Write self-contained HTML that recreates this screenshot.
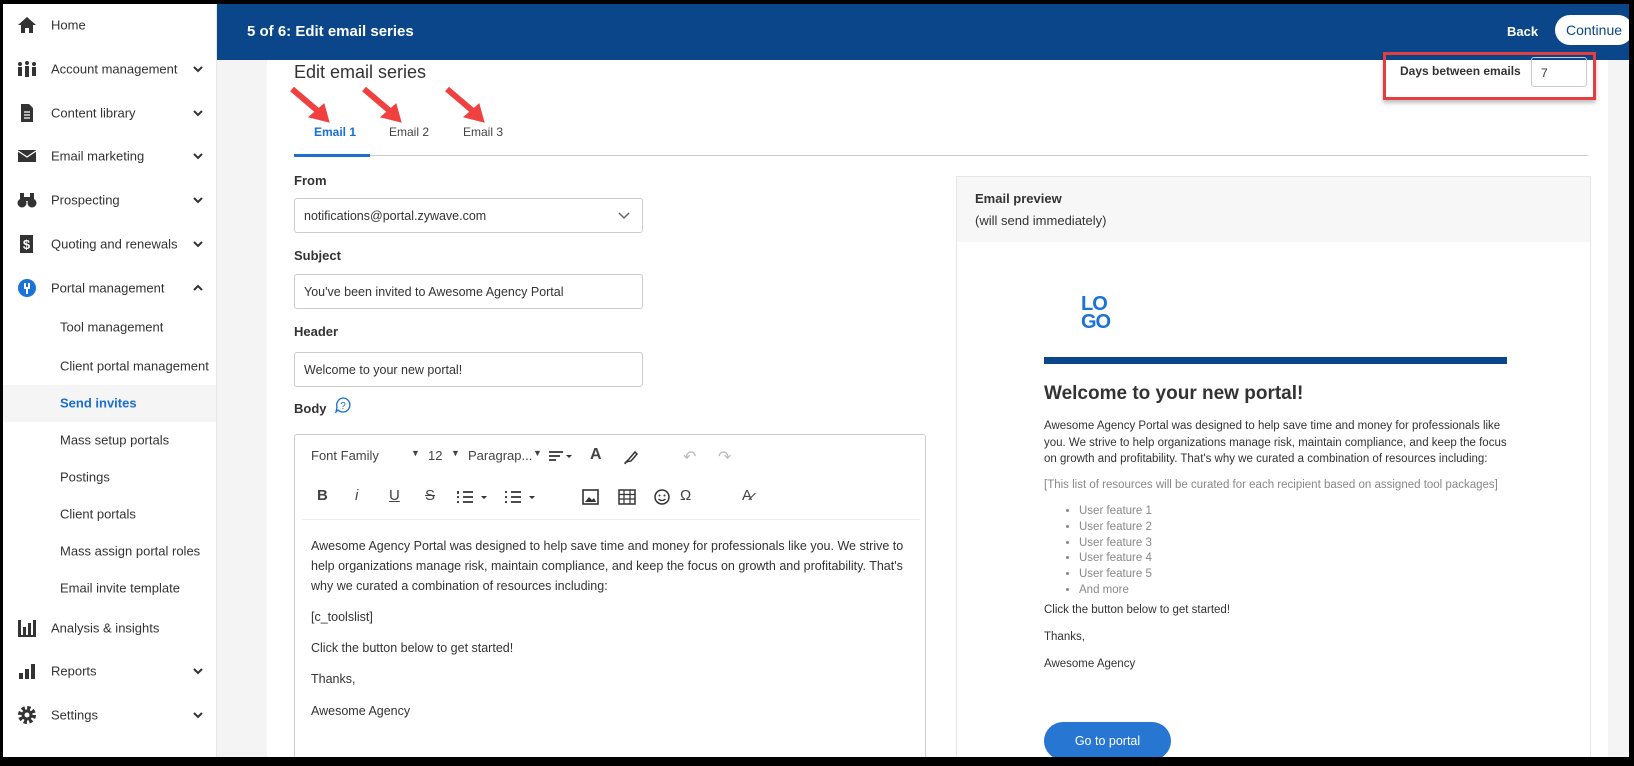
<!DOCTYPE html>
<html><head><meta charset="utf-8">
<style>
*{box-sizing:border-box;margin:0;padding:0}
body{width:1634px;height:766px;background:#000;position:relative;overflow:hidden;font-family:"Liberation Sans",sans-serif;color:#333}
.frame{position:absolute;left:3px;top:4px;width:1626px;height:753px;background:#f4f4f4;overflow:hidden}
.side{position:absolute;left:0;top:0;width:214px;height:753px;background:#fff;border-right:1px solid #e6e6e6}
.si{position:absolute;left:48px;font-size:13px;color:#333;transform:translateY(-50%)}
.sub{position:absolute;left:57px;font-size:13px;color:#333;transform:translateY(-50%)}
.ic{position:absolute;left:14px;width:20px;height:20px;transform:translateY(-50%)}
.chev{position:absolute;left:190px;width:10px;height:10px;transform:translateY(-50%)}
.hdr{position:absolute;left:214px;top:0;right:0;height:56px;background:#0b468a}
.main{position:absolute;left:264px;top:56px;width:1341px;height:697px;background:#fff}
.abs{position:absolute}
.lbl{position:absolute;left:27px;font-size:13px;color:#333;font-weight:bold}
.inp{position:absolute;left:27px;width:349px;height:35px;border:1px solid #ccc;border-radius:3px;font-size:12.5px;color:#333;padding:10px 9px}
.tb{position:absolute;font-size:13px;color:#444}
.pv{position:absolute;font-size:11.5px;color:#333;line-height:16.5px}
</style></head><body>
<div class="frame">
<div class="side">
  <svg class="ic" style="top:21px" viewBox="0 0 20 20"><path d="M10 2 L1 10 H4 V18 H8 V13 H12 V18 H16 V10 H19 Z" fill="#333"/></svg><div class="si" style="top:21px">Home</div>
  <svg class="ic" style="top:65px" viewBox="0 0 20 20"><g fill="#333"><circle cx="3" cy="5" r="2"/><circle cx="10" cy="4" r="2"/><circle cx="17" cy="5" r="2"/><rect x="1" y="8" width="4" height="9"/><rect x="8" y="7" width="4" height="11"/><rect x="15" y="8" width="4" height="9"/></g></svg><div class="si" style="top:65px">Account management</div><svg class="chev" style="top:65px" viewBox="0 0 10 10"><path d="M1 3 L5 7 L9 3" stroke="#333" stroke-width="2" fill="none"/></svg>
  <svg class="ic" style="top:109px" viewBox="0 0 20 20"><path d="M4 1 H12 L16 5 V19 H4 Z" fill="#333"/><path d="M7 9 H13 M7 12 H13 M7 15 H13" stroke="#fff" stroke-width="1.3"/></svg><div class="si" style="top:109px">Content library</div><svg class="chev" style="top:109px" viewBox="0 0 10 10"><path d="M1 3 L5 7 L9 3" stroke="#333" stroke-width="2" fill="none"/></svg>
  <svg class="ic" style="top:152px" viewBox="0 0 20 20"><rect x="1" y="4" width="18" height="12" fill="#333"/><path d="M1 5 L10 11 L19 5" stroke="#fff" stroke-width="1.3" fill="none"/></svg><div class="si" style="top:152px">Email marketing</div><svg class="chev" style="top:152px" viewBox="0 0 10 10"><path d="M1 3 L5 7 L9 3" stroke="#333" stroke-width="2" fill="none"/></svg>
  <svg class="ic" style="top:196px" viewBox="0 0 20 20"><g fill="#333"><circle cx="5" cy="13" r="4.5"/><circle cx="15" cy="13" r="4.5"/><rect x="3" y="3" width="4" height="8"/><rect x="13" y="3" width="4" height="8"/><rect x="7" y="7" width="6" height="4"/></g></svg><div class="si" style="top:196px">Prospecting</div><svg class="chev" style="top:196px" viewBox="0 0 10 10"><path d="M1 3 L5 7 L9 3" stroke="#333" stroke-width="2" fill="none"/></svg>
  <svg class="ic" style="top:240px" viewBox="0 0 20 20"><rect x="3" y="1" width="13" height="18" fill="#333"/><text x="9.5" y="15" font-size="13" font-weight="bold" fill="#fff" text-anchor="middle" font-family="Liberation Sans">$</text></svg><div class="si" style="top:240px">Quoting and renewals</div><svg class="chev" style="top:240px" viewBox="0 0 10 10"><path d="M1 3 L5 7 L9 3" stroke="#333" stroke-width="2" fill="none"/></svg>
  <svg class="ic" style="top:284px" viewBox="0 0 20 20"><circle cx="10" cy="10" r="9" fill="#1a73d9"/><path d="M8 5 V10 H12 V5 M10 10 V16" stroke="#fff" stroke-width="2" fill="none"/></svg><div class="si" style="top:284px">Portal management</div><svg class="chev" style="top:284px" viewBox="0 0 10 10"><path d="M1 7 L5 3 L9 7" stroke="#333" stroke-width="2" fill="none"/></svg>
  <div class="sub" style="top:323px">Tool management</div>
  <div class="sub" style="top:362px">Client portal management</div>
  <div class="abs" style="left:0;top:381px;width:213px;height:37px;background:#f5f5f5"></div>
  <div class="sub" style="top:399px;color:#1a6fd0;font-weight:bold">Send invites</div>
  <div class="sub" style="top:436px">Mass setup portals</div>
  <div class="sub" style="top:473px">Postings</div>
  <div class="sub" style="top:510px">Client portals</div>
  <div class="sub" style="top:547px">Mass assign portal roles</div>
  <div class="sub" style="top:584px">Email invite template</div>
  <svg class="ic" style="top:624px" viewBox="0 0 20 20"><g fill="#333"><rect x="1" y="2" width="3" height="16"/><rect x="6" y="9" width="3" height="9"/><rect x="11" y="5" width="3" height="13"/><rect x="16" y="2" width="3" height="16"/><rect x="1" y="17" width="18" height="2"/></g></svg><div class="si" style="top:624px">Analysis &amp; insights</div>
  <svg class="ic" style="top:667px" viewBox="0 0 20 20"><g fill="#333"><rect x="2" y="12" width="4" height="6"/><rect x="8" y="8" width="4" height="10"/><rect x="14" y="3" width="4" height="15"/></g></svg><div class="si" style="top:667px">Reports</div><svg class="chev" style="top:667px" viewBox="0 0 10 10"><path d="M1 3 L5 7 L9 3" stroke="#333" stroke-width="2" fill="none"/></svg>
  <svg class="ic" style="top:711px" viewBox="0 0 20 20"><circle cx="10" cy="10" r="6.5" fill="none" stroke="#333" stroke-width="5" stroke-dasharray="3 2.1"/><circle cx="10" cy="10" r="5.5" fill="#333"/><circle cx="10" cy="10" r="2.5" fill="#fff"/></svg><div class="si" style="top:711px">Settings</div><svg class="chev" style="top:711px" viewBox="0 0 10 10"><path d="M1 3 L5 7 L9 3" stroke="#333" stroke-width="2" fill="none"/></svg>
</div>

<div class="hdr">
  <div class="abs" style="left:30px;top:19px;color:#fff;font-size:15px;font-weight:bold">5 of 6: Edit email series</div>
  <div class="abs" style="left:1290px;top:20px;color:#fff;font-size:13px;font-weight:bold">Back</div>
  <div class="abs" style="left:1338px;top:11px;width:78px;height:30px;border-radius:15px;background:#fff;color:#0b468a;font-size:14px;text-align:center;line-height:30px">Continue</div>
</div>

<div class="main">
  <div class="abs" style="left:27px;top:2px;font-size:18px;color:#333">Edit email series</div>
  <div class="tb" style="left:47px;top:65px;color:#1a6fd0;font-weight:bold;font-size:12px">Email 1</div>
  <div class="tb" style="left:122px;top:65px;font-size:12px">Email 2</div>
  <div class="tb" style="left:196px;top:65px;font-size:12px">Email 3</div>
  <div class="abs" style="left:27px;top:95px;width:1294px;height:1px;background:#ccc"></div>
  <div class="abs" style="left:27px;top:94px;width:76px;height:3px;background:#1a6fd0"></div>
  <svg class="abs" style="left:0;top:0" width="260" height="80" viewBox="0 0 260 80"><g fill="#f04040" stroke="#f04040"><path d="M25 29 L52 52" stroke-width="6"/><path d="M62 62 L42 57 L57 44 Z"/><path d="M97 29 L124 52" stroke-width="6"/><path d="M134 62 L114 57 L129 44 Z"/><path d="M180 29 L207 52" stroke-width="6"/><path d="M217 62 L197 57 L212 44 Z"/></g></svg>
  <div class="abs" style="left:1116px;top:-8px;width:213px;height:48px;border:3px solid #e53e3e;box-shadow:0 3px 4px rgba(0,0,0,.25)"></div>
  <div class="abs" style="left:1133px;top:4px;font-size:12px;font-weight:bold;color:#333">Days between emails</div>
  <div class="abs" style="left:1264px;top:-3px;width:56px;height:30px;border:1px solid #ccc;border-radius:3px;font-size:12px;padding:8px 9px">7</div>

  <div class="lbl" style="top:113px">From</div>
  <div class="inp" style="top:138px">notifications@portal.zywave.com<svg class="abs" style="right:12px;top:13px" width="12" height="8" viewBox="0 0 12 8"><path d="M1 1 L6 6 L11 1" stroke="#666" stroke-width="1.5" fill="none"/></svg></div>
  <div class="lbl" style="top:188px">Subject</div>
  <div class="inp" style="top:214px">You've been invited to Awesome Agency Portal</div>
  <div class="lbl" style="top:264px">Header</div>
  <div class="inp" style="top:292px">Welcome to your new portal!</div>
  <div class="lbl" style="top:341px">Body</div>
  <svg class="abs" style="left:68px;top:337px" width="16" height="16" viewBox="0 0 16 16"><path d="M8 1 A7 7 0 1 1 3 13 L1 15 L2 10 A7 7 0 0 1 8 1Z" fill="none" stroke="#1a6fd0" stroke-width="1.3"/><text x="8" y="12" font-size="10" fill="#1a6fd0" text-anchor="middle" font-family="Liberation Sans">?</text></svg>
  <div class="abs" style="left:27px;top:374px;width:632px;height:328px;border:1px solid #ccc;border-radius:3px">
    <div class="tb" style="left:16px;top:13px">Font Family</div><div class="tb" style="left:116px;top:13px;font-size:9px">▼</div>
    <div class="tb" style="left:133px;top:13px">12</div><div class="tb" style="left:156px;top:13px;font-size:9px">▼</div>
    <div class="tb" style="left:173px;top:13px">Paragrap...</div><div class="tb" style="left:238px;top:13px;font-size:9px">▼</div>
    <svg class="abs" style="left:253px;top:14px" width="28" height="14"><path d="M1 3 H15 M1 7 H12 M1 11 H8" stroke="#333" stroke-width="1.8"/><path d="M18 6 H24 L21 9Z" fill="#333"/></svg>
    <div class="tb" style="left:295px;top:11px;font-size:16px;font-weight:bold">A</div>
    <svg class="abs" style="left:328px;top:14px" width="16" height="16"><path d="M3 13 L6 10 L12 3 L14 5 L8 12 Z M3 13 L2 15" stroke="#333" stroke-width="1.5" fill="none"/></svg>
    <div class="tb" style="left:388px;top:12px;color:#bbb;font-size:16px">↶</div><div class="tb" style="left:423px;top:12px;color:#bbb;font-size:16px">↷</div>
    <div class="tb" style="left:22px;top:52px;font-weight:bold;font-size:15px">B</div>
    <div class="tb" style="left:60px;top:52px;font-style:italic;font-size:15px">i</div>
    <div class="tb" style="left:94px;top:52px;text-decoration:underline;font-size:15px">U</div>
    <div class="tb" style="left:130px;top:52px;text-decoration:line-through;font-size:15px">S</div>
    <svg class="abs" style="left:162px;top:54px" width="90" height="16"><path d="M6 3 H16 M6 8 H16 M6 13 H16 M54 3 H64 M54 8 H64 M54 13 H64" stroke="#333" stroke-width="1.8"/><path d="M1 2 V5 M1 7 V9 M1 12 V14 M49 2 V4 M49 7 V9 M49 12 V14" stroke="#333" stroke-width="1.8"/><path d="M24 7 H30 L27 10Z M72 7 H78 L75 10Z" fill="#333"/></svg>
    <svg class="abs" style="left:287px;top:54px" width="150" height="18"><rect x="1" y="1" width="15" height="14" fill="none" stroke="#333" stroke-width="1.6"/><path d="M3 13 L7 8 L10 11 L12 9 L14 13Z" fill="#333"/><rect x="37" y="1" width="16" height="14" fill="none" stroke="#333" stroke-width="1.5"/><path d="M37 5.5 H53 M37 10 H53 M42 1 V15 M48 1 V15" stroke="#333" stroke-width="1.2"/><circle cx="80" cy="8" r="7" fill="none" stroke="#333" stroke-width="1.5"/><circle cx="77.5" cy="6.5" r="1" fill="#333"/><circle cx="82.5" cy="6.5" r="1" fill="#333"/><path d="M76.5 10 Q80 13 83.5 10" stroke="#333" stroke-width="1.3" fill="none"/></svg>
    <div class="tb" style="left:385px;top:52px;font-size:15px">Ω</div>
    <div class="tb" style="left:447px;top:52px;font-size:15px">A̷</div>
    <div class="abs" style="left:7px;top:84px;width:618px;height:1px;background:#eee"></div>
    <div class="abs" style="left:16px;top:101px;width:600px;font-size:12.5px;line-height:20px;color:#333">Awesome Agency Portal was designed to help save time and money for professionals like you. We strive to help organizations manage risk, maintain compliance, and keep the focus on growth and profitability. That's why we curated a combination of resources including:</div>
    <div class="abs" style="left:16px;top:175px;font-size:12.5px">[c_toolslist]</div>
    <div class="abs" style="left:16px;top:206px;font-size:12.5px">Click the button below to get started!</div>
    <div class="abs" style="left:16px;top:237px;font-size:12.5px">Thanks,</div>
    <div class="abs" style="left:16px;top:269px;font-size:12.5px">Awesome Agency</div>
  </div>

  <div class="abs" style="left:689px;top:116px;width:635px;height:600px;border:1px solid #e6e6e6;background:#fff">
    <div class="abs" style="left:0;top:0;width:100%;height:65px;background:#f7f7f7"></div>
    <div class="abs" style="left:18px;top:14px;font-size:13px;font-weight:bold;color:#333">Email preview</div>
    <div class="abs" style="left:18px;top:36px;font-size:13px;color:#333">(will send immediately)</div>
    <div class="abs" style="left:124px;top:118px;font-size:20px;line-height:18px;font-weight:900;color:#1a73d9;letter-spacing:-1px">LO<br>GO</div>
    <div class="abs" style="left:87px;top:180px;width:463px;height:7px;background:#0b468a"></div>
    <div class="abs" style="left:87px;top:206px;font-size:19px;font-weight:bold;color:#333">Welcome to your new portal!</div>
    <div class="pv" style="left:87px;top:241px;width:470px">Awesome Agency Portal was designed to help save time and money for professionals like you. We strive to help organizations manage risk, maintain compliance, and keep the focus on growth and profitability. That's why we curated a combination of resources including:</div>
    <div class="pv" style="left:87px;top:300px;color:#888">[This list of resources will be curated for each recipient based on assigned tool packages]</div>
    <ul class="pv" style="left:122px;top:327px;color:#888;line-height:15.8px">
      <li>User feature 1</li><li>User feature 2</li><li>User feature 3</li><li>User feature 4</li><li>User feature 5</li><li>And more</li>
    </ul>
    <div class="pv" style="left:87px;top:425px">Click the button below to get started!</div>
    <div class="pv" style="left:87px;top:452px">Thanks,</div>
    <div class="pv" style="left:87px;top:479px">Awesome Agency</div>
    <div class="abs" style="left:87px;top:545px;width:127px;height:38px;border-radius:19px;background:#2676d2;color:#fff;font-size:12.5px;text-align:center;line-height:38px">Go to portal</div>
  </div>
</div>
</div>
</body></html>
